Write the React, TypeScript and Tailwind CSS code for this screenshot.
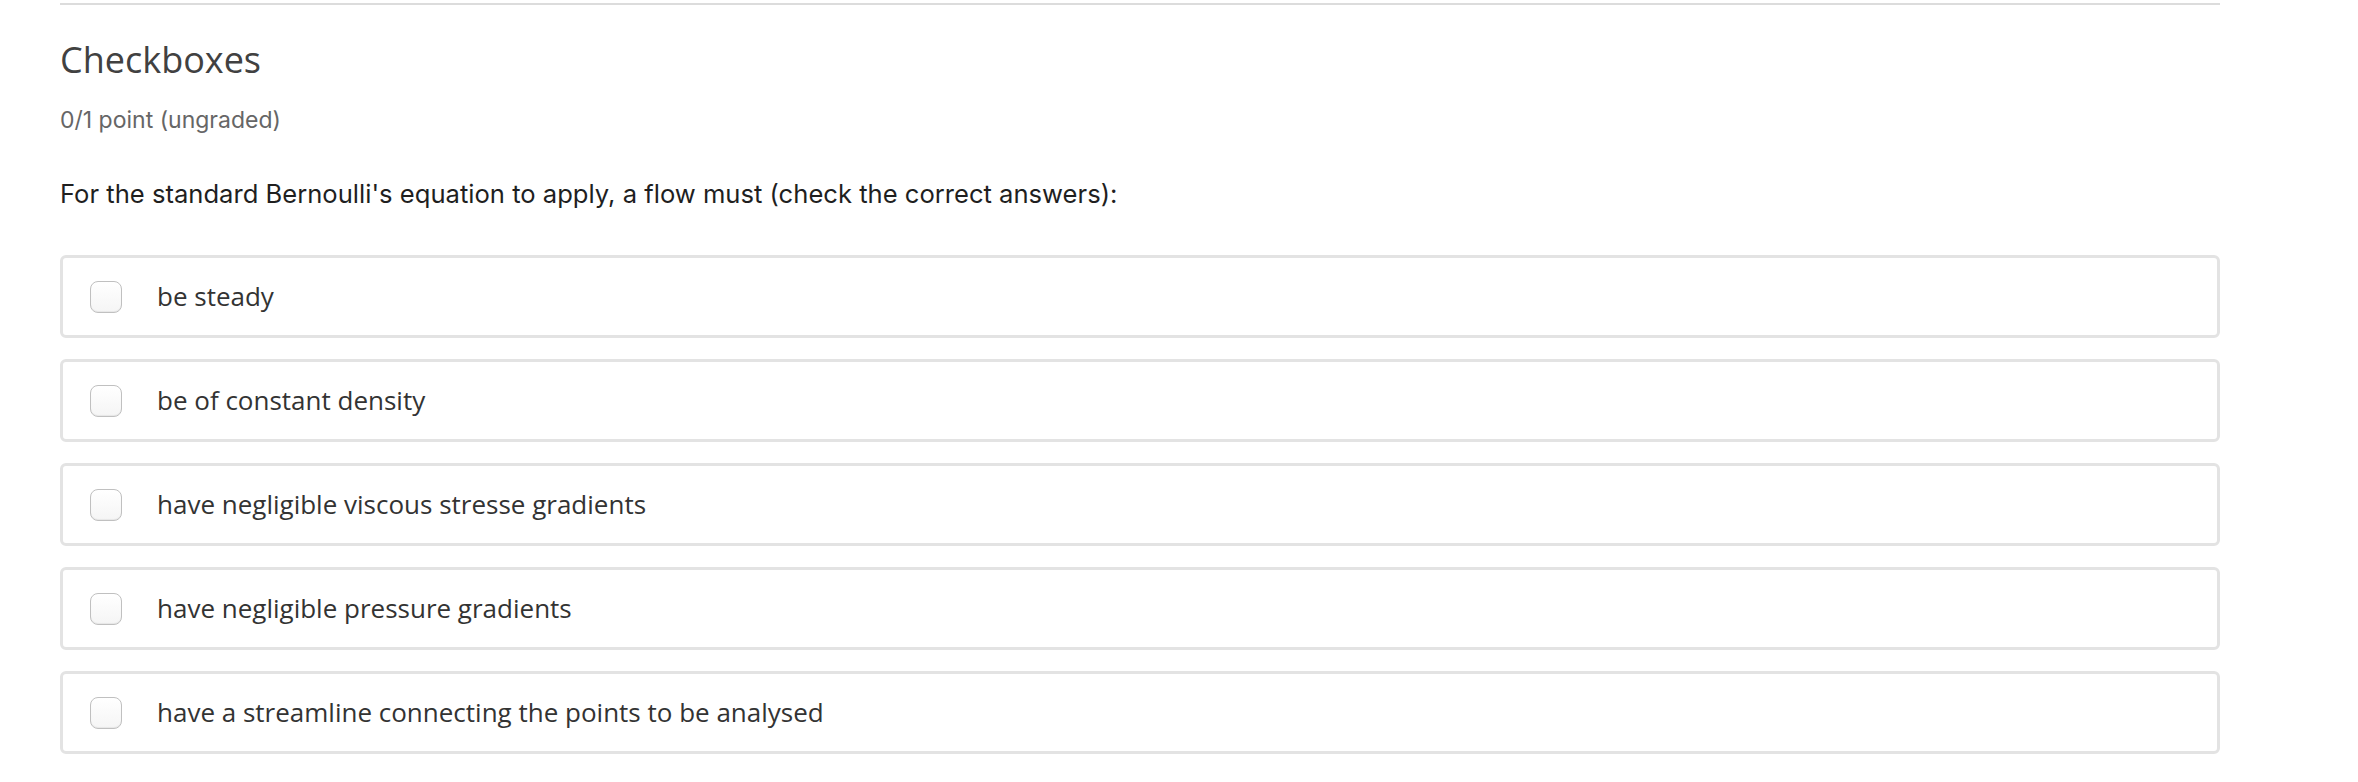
import React from "react";

const options = [
  "be steady",
  "be of constant density",
  "have negligible viscous stresse gradients",
  "have negligible pressure gradients",
  "have a streamline connecting the points to be analysed",
];

export default function App() {
  return (
    <div className="min-h-[782px] w-[2358px] bg-white pt-[3px]">
      <div className="ml-[60px] w-[2160px]">
        <div className="h-[2px] bg-[#dcdcdc]" />
        <h2
          className="mt-[31px] text-[36px] leading-[48px] font-normal text-[#414141]"
          style={{ fontFamily: '"Open Sans", sans-serif' }}
        >
          Checkboxes
        </h2>
        <div
          className="mt-[22px] text-[23px] leading-[28px] text-[#666666]"
          style={{ fontFamily: "Inter, sans-serif" }}
        >
          0/1 point (ungraded)
        </div>
        <p
          className="mt-[44px] text-[25.6px] leading-[32px] text-[#1f1f1f]"
          style={{ fontFamily: "Inter, sans-serif" }}
        >
          For the standard Bernoulli's equation to apply, a flow must (check the correct answers):
        </p>
        <div className="mt-[45px] flex flex-col gap-[21px]">
          {options.map((o) => (
            <label
              key={o}
              className="flex h-[83px] items-center rounded-[6px] border-[3px] border-[#e3e3e3] bg-white pl-[27px]"
            >
              <span className="h-[32px] w-[32px] shrink-0 rounded-[8px] border border-[#c0c0c0] bg-gradient-to-b from-white to-[#f5f5f5] shadow-[inset_0_-1px_1px_rgba(0,0,0,0.06)]" />
              <span
                className="ml-[35px] text-[26px] text-[#333333]"
                style={{ fontFamily: '"Open Sans", sans-serif' }}
              >
                {o}
              </span>
            </label>
          ))}
        </div>
      </div>
    </div>
  );
}
